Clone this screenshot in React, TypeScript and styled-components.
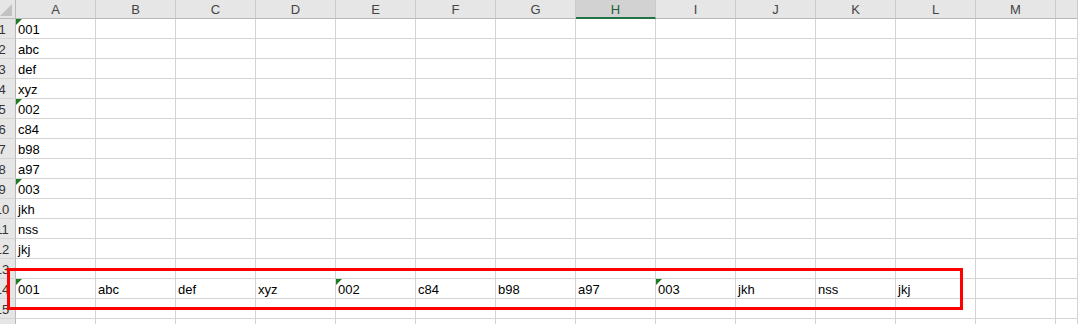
import { Fragment } from "react";
import styled, { createGlobalStyle } from "styled-components";

const GlobalStyle = createGlobalStyle`
  html, body {
    margin: 0;
    padding: 0;
    background: #ffffff;
    overflow: hidden;
  }
`;

const columns = ["A", "B", "C", "D", "E", "F", "G", "H", "I", "J", "K", "L", "M", ""];
const columnA = ["001", "abc", "def", "xyz", "002", "c84", "b98", "a97", "003", "jkh", "nss", "jkj"];

// text stored as number-looking strings gets the green flag
const isFlagged = (v: string) => /^\d+$/.test(v);

const Sheet = styled.div`
  position: relative;
  width: 1078px;
  height: 324px;
  overflow: hidden;
  display: grid;
  grid-template-columns: 16px repeat(13, 80px) 1fr;
  grid-template-rows: 19px repeat(16, 20px);
  font-family: "Liberation Sans", Arial, sans-serif;
  font-size: 13px;
`;

const Corner = styled.div`
  position: relative;
  background: #e6e6e6;
  border-right: 1px solid #b9b9b9;
  border-bottom: 1px solid #b9b9b9;
  box-sizing: border-box;

  &::after {
    content: "";
    position: absolute;
    right: 3px;
    bottom: 2px;
    border-left: 12px solid transparent;
    border-bottom: 12px solid #c2c2c2;
  }
`;

const ColHeader = styled.div<{ $active?: boolean }>`
  box-sizing: border-box;
  display: flex;
  align-items: center;
  justify-content: center;
  background: ${(p) => (p.$active ? "#d2d2d2" : "#e6e6e6")};
  border-right: 1px solid #cacaca;
  border-bottom: ${(p) => (p.$active ? "2px solid #217346" : "1px solid #b9b9b9")};
  color: ${(p) => (p.$active ? "#1b5e38" : "#444444")};
  line-height: 15px;
  padding-top: ${(p) => (p.$active ? "1px" : "0")};
`;

const RowHeader = styled.div`
  box-sizing: border-box;
  overflow: hidden;
  display: flex;
  align-items: flex-end;
  background: #e6e6e6;
  border-right: 1px solid #b9b9b9;
  border-bottom: 1px solid #d4d4d4;
  color: #333333;
  line-height: 15px;
  padding-bottom: 1px;
`;

const RowNumber = styled.span`
  flex: none;
  width: 26px;
  margin-left: -11px;
  text-align: center;
`;

const Cell = styled.div<{ $flag?: boolean }>`
  position: relative;
  box-sizing: border-box;
  display: flex;
  align-items: flex-end;
  padding-left: 2px;
  padding-bottom: 1px;
  border-right: 1px solid #d4d4d4;
  border-bottom: 1px solid #d4d4d4;
  color: #000000;
  line-height: 15px;
  white-space: nowrap;

  &::before {
    content: "";
    display: ${(p) => (p.$flag ? "block" : "none")};
    position: absolute;
    left: 0;
    top: 0;
    border-top: 6px solid #1e7b22;
    border-right: 6px solid transparent;
  }
`;

const Highlight = styled.div`
  position: absolute;
  left: 7px;
  top: 268px;
  width: 956px;
  height: 42px;
  box-sizing: border-box;
  border: 3px solid #ff0000;
  pointer-events: none;
`;

const cellValue = (row: number, col: number) => {
  if (row <= 12 && col === 0) return columnA[row - 1];
  if (row === 14 && col < 12) return columnA[col];
  return "";
};

const App = () => {
  const rows = Array.from({ length: 16 }, (_, i) => i + 1);

  return (
    <>
      <GlobalStyle />
      <Sheet>
        <Corner />
        {columns.map((c, i) => (
          <ColHeader key={i} $active={c === "H"}>
            {c}
          </ColHeader>
        ))}
        {rows.map((r) => (
          <Fragment key={r}>
            <RowHeader>
              <RowNumber>{r}</RowNumber>
            </RowHeader>
            {columns.map((_, ci) => {
              const v = cellValue(r, ci);
              return (
                <Cell key={ci} $flag={isFlagged(v)}>
                  {v}
                </Cell>
              );
            })}
          </Fragment>
        ))}
        <Highlight />
      </Sheet>
    </>
  );
};

export default App;
